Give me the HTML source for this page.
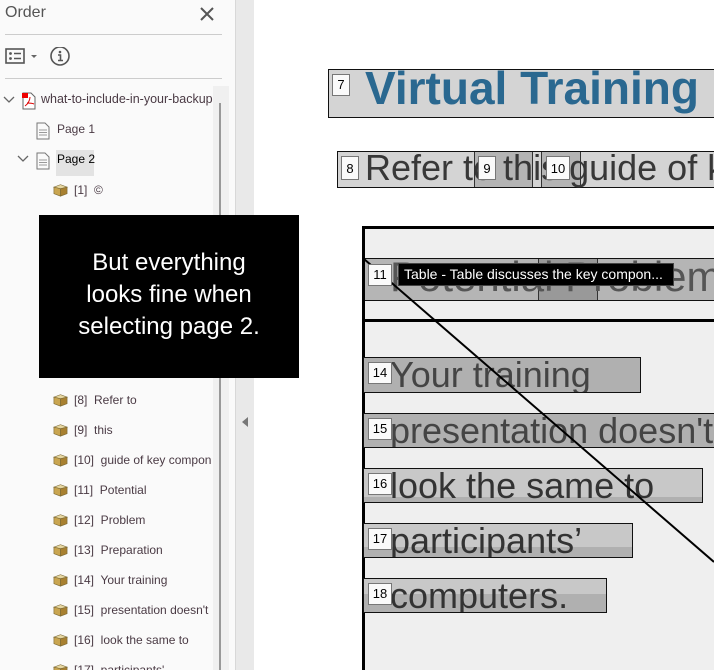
<!DOCTYPE html>
<html><head><meta charset="utf-8"><style>
*{margin:0;padding:0;box-sizing:border-box}
html,body{width:714px;height:670px;overflow:hidden}
body{position:relative;background:#fff;font-family:"Liberation Sans",sans-serif}
.a{position:absolute}
.panel{left:0;top:0;width:236px;height:670px;background:#fafafa;border-right:1px solid #d8d8d8}
.div{left:236px;top:0;width:18px;height:670px;background:#e9e9e9}
.item{position:absolute;left:52px;height:20px;font-size:12px;color:#4a3a44;display:flex;align-items:center;white-space:nowrap}
.box{width:17px;height:14px;margin-right:5px;position:relative}
.num{position:absolute;background:#fafafa;border:1px solid #777;font-size:13px;color:#000;text-align:center;line-height:20px}
.tl{position:absolute;left:363px;border:1.5px solid #111;font-size:36px;color:#444;line-height:33px;padding-left:26px;white-space:nowrap;overflow:hidden}
</style></head><body>
<div class="a panel"></div>
<div class="a div"></div>
<svg class="a" style="left:240px;top:416px" width="10" height="12"><path d="M8 1v10L2 6z" fill="#777"/></svg>
<div class="a" style="left:5px;top:4px;font-size:16px;color:#555">Order</div>
<svg class="a" style="left:199px;top:6px" width="16" height="16"><path d="M2 2L14 14M14 2L2 14" stroke="#555" stroke-width="2"/></svg>
<div class="a" style="left:5px;top:34px;width:217px;height:1px;background:#ccc"></div>
<svg class="a" style="left:5px;top:47px" width="70" height="20"><rect x="1" y="2" width="18" height="14" fill="none" stroke="#555" stroke-width="1.6"/><circle cx="5.5" cy="6.5" r="1.4" fill="#555"/><circle cx="5.5" cy="11.5" r="1.4" fill="#555"/><path d="M9 6.5h7M9 11.5h7" stroke="#555" stroke-width="1.6"/><path d="M26 8h6l-3 3z" fill="#666"/><circle cx="55" cy="9" r="9" fill="none" stroke="#555" stroke-width="1.6"/><circle cx="55" cy="5" r="1.3" fill="#555"/><path d="M53 8h2.5v5.5M53 13.5h5" stroke="#555" stroke-width="1.6" fill="none"/></svg>
<div class="a" style="left:5px;top:78px;width:217px;height:1px;background:#ccc"></div>
<div class="a" style="left:213px;top:86px;width:16px;height:584px;background:#f0f0f0"></div>
<div class="a" style="left:219px;top:103px;width:2px;height:567px;background:#999"></div>
<svg class="a" style="left:2px;top:94px" width="14" height="12"><path d="M2 3l5 5 5-5" stroke="#666" fill="none" stroke-width="1.3"/></svg>
<svg class="a" style="left:21px;top:92px" width="16" height="18"><path d="M2 1h8l4 4v12H2z" fill="#fff" stroke="#666"/><rect x="1" y="1" width="6" height="5" fill="#e00"/><path d="M4 14c3-2 5-6 5-9M6 11c2 0 5 0 7 1" stroke="#d00" fill="none"/></svg>
<div class="a" style="left:41px;top:92px;font-size:12.5px;color:#4a3a44;width:173px;overflow:hidden;white-space:nowrap">what-to-include-in-your-backup</div>
<svg class="a" style="left:36px;top:122px" width="14" height="18"><path d="M1 1h8l4 4v12H1z" fill="#fafafa" stroke="#777"/><path d="M3 8h8M3 10.5h8M3 13h8" stroke="#999"/></svg>
<div class="a" style="left:57px;top:122px;font-size:12px;color:#4a3a44;white-space:nowrap">Page 1</div>
<svg class="a" style="left:16px;top:153px" width="14" height="12"><path d="M2 3l5 5 5-5" stroke="#666" fill="none" stroke-width="1.3"/></svg>
<svg class="a" style="left:36px;top:152px" width="14" height="18"><path d="M1 1h8l4 4v12H1z" fill="#fafafa" stroke="#777"/><path d="M3 8h8M3 10.5h8M3 13h8" stroke="#999"/></svg>
<div class="a" style="left:56px;top:150px;width:38px;height:26px;background:#e3e3e3;font-size:12px;color:#000;padding:2px 1px;white-space:nowrap">Page 2</div>
<svg width="0" height="0" style="position:absolute"><defs><g id="bx"><path d="M1 5l8-3 8 3-8 2z" fill="#e6d6a0" stroke="#776633" stroke-width=".7"/><path d="M1 5v8l8 3V7z" fill="#c9a550" stroke="#776633" stroke-width=".7"/><path d="M17 5v8l-8 3V7z" fill="#a88030" stroke="#776633" stroke-width=".7"/></g></defs></svg>
<div class="item" style="top:180px"><svg class="box" viewBox="0 0 18 17"><use href="#bx"/></svg>[1]&nbsp; ©</div>
<div class="item" style="top:390px"><svg class="box" viewBox="0 0 18 17"><use href="#bx"/></svg>[8]&nbsp; Refer to</div>
<div class="item" style="top:420px"><svg class="box" viewBox="0 0 18 17"><use href="#bx"/></svg>[9]&nbsp; this</div>
<div class="item" style="top:450px"><svg class="box" viewBox="0 0 18 17"><use href="#bx"/></svg>[10]&nbsp; guide of key compon</div>
<div class="item" style="top:480px"><svg class="box" viewBox="0 0 18 17"><use href="#bx"/></svg>[11]&nbsp; Potential</div>
<div class="item" style="top:510px"><svg class="box" viewBox="0 0 18 17"><use href="#bx"/></svg>[12]&nbsp; Problem</div>
<div class="item" style="top:540px"><svg class="box" viewBox="0 0 18 17"><use href="#bx"/></svg>[13]&nbsp; Preparation</div>
<div class="item" style="top:570px"><svg class="box" viewBox="0 0 18 17"><use href="#bx"/></svg>[14]&nbsp; Your training</div>
<div class="item" style="top:600px"><svg class="box" viewBox="0 0 18 17"><use href="#bx"/></svg>[15]&nbsp; presentation doesn't</div>
<div class="item" style="top:630px"><svg class="box" viewBox="0 0 18 17"><use href="#bx"/></svg>[16]&nbsp; look the same to</div>
<div class="item" style="top:660px"><svg class="box" viewBox="0 0 18 17"><use href="#bx"/></svg>[17]&nbsp; participants'</div>
<div class="a" style="left:39px;top:215px;width:260px;height:163px;background:#000;color:#fff;font-size:24px;line-height:32px;text-align:center;padding-top:32px">But everything<br>looks fine when<br>selecting page 2.</div>

<div class="a" style="left:328px;top:69px;width:390px;height:49px;background:#d4d4d4;border:1.5px solid #111"></div>
<div class="num" style="left:332px;top:74px;width:18px;height:22px">7</div>
<div class="a" style="left:365px;top:60px;font-size:46px;font-weight:bold;color:#2a6890;white-space:nowrap;line-height:56px">Virtual Training</div>
<div class="a" style="left:337px;top:151px;width:380px;height:37px;background:#d4d4d4;border:1.5px solid #111"></div>
<div class="a" style="left:474px;top:152px;width:59px;height:35px;background:#b4b4b4;border-left:1px solid #333;border-right:1px solid #333"></div>
<div class="a" style="left:541px;top:152px;width:40px;height:35px;background:#b4b4b4;border-left:1px solid #333;border-right:1px solid #333"></div>
<div class="a" style="left:365px;top:146px;font-size:36px;color:#383838;white-space:nowrap;line-height:44px">Refer to this guide of k</div>
<div class="num" style="left:341px;top:156px;width:18px;height:24px;line-height:24px">8</div>
<div class="num" style="left:478px;top:156px;width:18px;height:24px;line-height:24px">9</div>
<div class="num" style="left:546px;top:156px;width:24px;height:24px;line-height:24px">10</div>

<div class="a" style="left:362px;top:226px;width:360px;height:460px;background:#efefef;border:3px solid #000"></div>
<div class="a" style="left:365px;top:258px;width:352px;height:43px;background:#b5b5b5;border-top:1.5px solid #111;border-bottom:1.5px solid #111"></div>
<div class="a" style="left:538px;top:259px;width:60px;height:41px;background:#999;border-left:1px solid #333;border-right:1px solid #333"></div>
<div class="a" style="left:390px;top:254px;font-size:42px;color:#555;white-space:nowrap;line-height:46px">Potential Problem</div>
<div class="a" style="left:365px;top:319px;width:352px;height:3px;background:#000"></div>

<div class="tl" style="top:357px;width:278px;height:36px;background:#b0b0b0">Your training</div>
<div class="tl" style="top:413px;width:360px;height:35px;background:#b0b0b0">presentation doesn't</div>
<div class="tl" style="top:468px;width:340px;height:35px;background:linear-gradient(#c8c8c8 85%,#b0b0b0 85%);color:#333">look the same to</div>
<div class="tl" style="top:523px;width:270px;height:35px;background:linear-gradient(#c8c8c8 70%,#b0b0b0 70%);color:#333">participants’</div>
<div class="tl" style="top:578px;width:244px;height:35px;background:linear-gradient(#c8c8c8 45%,#b0b0b0 45%);color:#333">computers.</div>
<div class="num" style="left:368px;top:362px;width:24px;height:22px">14</div>
<div class="num" style="left:368px;top:418px;width:24px;height:22px">15</div>
<div class="num" style="left:368px;top:473px;width:24px;height:22px">16</div>
<div class="num" style="left:368px;top:528px;width:24px;height:22px">17</div>
<div class="num" style="left:368px;top:583px;width:24px;height:22px">18</div>

<svg class="a" style="left:0;top:0" width="714" height="670"><path d="M364 259L714 562" stroke="#000" stroke-width="2"/></svg>
<div class="num" style="left:368px;top:264px;width:24px;height:22px">11</div>
<div class="a" style="left:398px;top:263px;width:276px;height:23px;background:#000;border:1px solid #444;color:#fff;font-size:14px;line-height:21px;padding-left:5px;white-space:nowrap">Table - Table discusses the key compon...</div>
</body></html>
